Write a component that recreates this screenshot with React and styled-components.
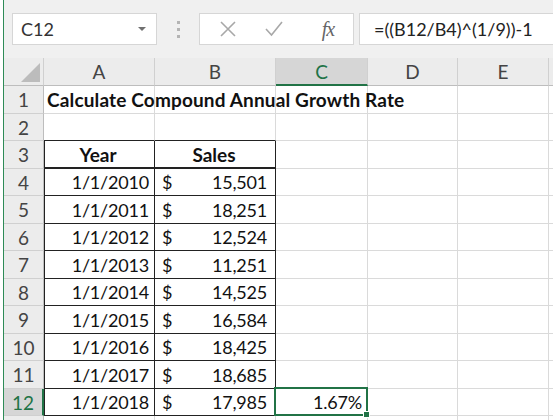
import React from "react";
import styled, { createGlobalStyle, css } from "styled-components";

const Global = createGlobalStyle`
  html, body { margin: 0; padding: 0; background: #fff; }
  body { font-family: Lato, "Liberation Sans", sans-serif; }
`;

const Frame = styled.div`
  width: 553px;
  height: 420px;
  overflow: hidden;
  padding-left: 3px;
  box-sizing: border-box;
  background: #fff;
`;

const Inner = styled.div`
  border-left: 1px solid #2e8b57;
  height: 100%;
  display: flex;
  flex-direction: column;
`;

const Bar = styled.div`
  height: 58px;
  flex: none;
  background: #f0f0f0;
  display: flex;
  align-items: center;
  padding-left: 8px;
`;

const Box = styled.div`
  height: 32px;
  box-sizing: border-box;
  background: #fff;
  border: 1px solid #d6d6d6;
  display: flex;
  align-items: center;
`;

const NameBox = styled(Box)`
  width: 145px;
  padding: 0 8px;
  justify-content: space-between;
  font-size: 18px;
  color: #333;
`;

const Caret = styled.span`
  width: 0;
  height: 0;
  border-left: 4px solid transparent;
  border-right: 4px solid transparent;
  border-top: 4px solid #707070;
  margin-right: 2px;
`;

const Grip = styled.div`
  width: 42px;
  display: flex;
  flex-direction: column;
  align-items: center;
  gap: 4px;
  span { width: 3px; height: 3px; background: #b4b4b4; }
`;

const IconBox = styled(Box)`
  width: 155px;
  padding-left: 17px;
`;

const IconSlot = styled.div`
  width: ${(p) => p.w}px;
  display: flex;
  align-items: center;
  justify-content: center;
`;

const Fx = styled.span`
  font-family: "Liberation Serif", serif;
  font-style: italic;
  font-size: 20px;
  color: #666;
  letter-spacing: -1px;
`;

const FormulaBox = styled(Box)`
  flex: 1;
  margin-left: 5px;
  margin-right: -10px;
  padding-left: 14px;
  font-size: 18px;
  color: #222;
`;

const Sheet = styled.div`
  display: grid;
  grid-template-columns: 40px 111px 121px 92px 90px 91px 40px;
  grid-template-rows: 28px repeat(6, 28px 27px) 28px;
  background: #fff;
`;

const Head = styled.div`
  box-sizing: border-box;
  background: #ececec;
  border-right: 1px solid #d0d0d0;
  border-bottom: 1px solid #bdbdbd;
  display: flex;
  align-items: center;
  justify-content: center;
  font-size: 19px;
  color: #444;
  ${(p) =>
    p.$sel &&
    css`
      background: #d6d6d6;
      color: #217346;
      border-bottom: 2px solid #217346;
    `}
`;

const Corner = styled(Head)`
  justify-content: flex-end;
  align-items: flex-end;
  padding: 0 3px 3px 0;
`;

const Tri = styled.span`
  width: 0;
  height: 0;
  border-left: 19px solid transparent;
  border-bottom: 19px solid #bcbcbc;
`;

const RowHead = styled.div`
  box-sizing: border-box;
  background: #ececec;
  border-right: 1px solid #bdbdbd;
  border-bottom: 1px solid #d0d0d0;
  display: flex;
  align-items: center;
  justify-content: center;
  font-size: 19px;
  color: #444;
  ${(p) =>
    p.$sel &&
    css`
      background: #d6d6d6;
      color: #217346;
      border-right: 2px solid #217346;
    `}
`;

const Cell = styled.div`
  box-sizing: border-box;
  position: relative;
  border-right: 1px solid ${(p) => (p.$tbl ? "#222" : "#dadada")};
  border-bottom: 1px solid ${(p) => (p.$tblTop || p.$tbl ? "#222" : "#dadada")};
  ${(p) => p.$left && css`box-shadow: inset 1px 0 0 #222;`}
  ${(p) => p.$thick && css`box-shadow: inset 0 -1px 0 #222 ${p.$left ? ", inset 1px 0 0 #222" : ""};`}
  display: flex;
  align-items: center;
  justify-content: ${(p) => p.$align || "flex-start"};
  padding: 0 5px 0 3px;
  font-size: ${(p) => (p.$bold ? 19 : 18)}px;
  letter-spacing: ${(p) => (p.$title ? "0.15px" : p.$bold ? "0" : "-0.2px")};
  color: #111;
  font-weight: ${(p) => (p.$bold ? 700 : 400)};
  white-space: nowrap;
  overflow: ${(p) => (p.$over ? "visible" : "hidden")};
  z-index: ${(p) => (p.$over ? 2 : 0)};
`;

const Money = styled.div`
  flex: 1;
  display: flex;
  justify-content: space-between;
  padding-left: 4px;
  padding-right: 3px;
`;

const Selection = styled.div`
  position: absolute;
  left: -2px;
  top: -2px;
  right: -1px;
  bottom: -1px;
  border: 2px solid #217346;
  pointer-events: none;
  &::after {
    content: "";
    position: absolute;
    right: -4px;
    bottom: -4px;
    width: 5px;
    height: 5px;
    background: #217346;
    border: 1px solid #fff;
  }
`;

const cols = ["A", "B", "C", "D", "E", ""];
const data = [
  ["1/1/2010", "15,501"],
  ["1/1/2011", "18,251"],
  ["1/1/2012", "12,524"],
  ["1/1/2013", "11,251"],
  ["1/1/2014", "14,525"],
  ["1/1/2015", "16,584"],
  ["1/1/2016", "18,425"],
  ["1/1/2017", "18,685"],
  ["1/1/2018", "17,985"],
];

function Row({ n, label = n, children }) {
  return (
    <>
      <RowHead $sel={n === 12}>{label}</RowHead>
      {children}
    </>
  );
}

function Blank({ from = 0, top }) {
  const cells = [];
  for (let i = from; i < 6; i++) cells.push(<Cell key={i} $tblTop={top && i < 2} />);
  return cells;
}

export default function App() {
  return (
    <>
      <Global />
      <Frame>
        <Inner>
          <Bar>
            <NameBox>
              <span>C12</span>
              <Caret />
            </NameBox>
            <Grip>
              <span />
              <span />
              <span />
            </Grip>
            <IconBox>
              <IconSlot w={22}>
                <svg width="18" height="18" viewBox="0 0 18 18">
                  <path d="M2 2 L16 16 M16 2 L2 16" stroke="#a8a8a8" strokeWidth="1.6" fill="none" />
                </svg>
              </IconSlot>
              <IconSlot w={70}>
                <svg width="20" height="18" viewBox="0 0 20 18">
                  <path d="M2 9 L7.5 15 L18 2" stroke="#a8a8a8" strokeWidth="1.6" fill="none" />
                </svg>
              </IconSlot>
              <IconSlot w={38}>
                <Fx>fx</Fx>
              </IconSlot>
            </IconBox>
            <FormulaBox>=((B12/B4)^(1/9))-1</FormulaBox>
          </Bar>
          <Sheet>
            <Corner>
              <Tri />
            </Corner>
            {cols.map((c) => (
              <Head key={c || "f"} $sel={c === "C"}>
                {c}
              </Head>
            ))}
            <Row n={1}>
              <Cell $bold $title $over>Calculate Compound Annual Growth Rate</Cell>
              <Blank from={1} />
            </Row>
            <Row n={2}>
              <Blank top />
            </Row>
            <Row n={3}>
              <Cell $tbl $left $thick $bold $align="center">Year</Cell>
              <Cell $tbl $thick $bold $align="center">Sales</Cell>
              <Blank from={2} />
            </Row>
            {data.map(([d, v], i) => {
              const n = i + 4;
              return (
                <Row key={n} n={n}>
                  <Cell $tbl $left $align="flex-end">{d}</Cell>
                  <Cell $tbl>
                    <Money>
                      <span>$</span>
                      <span>{v}</span>
                    </Money>
                  </Cell>
                  {n === 12 ? (
                    <Cell $align="flex-end" $over>
                      1.67%
                      <Selection />
                    </Cell>
                  ) : (
                    <Cell />
                  )}
                  <Blank from={3} />
                </Row>
              );
            })}
            <Row n={13} label="">
              <Blank />
            </Row>
          </Sheet>
        </Inner>
      </Frame>
    </>
  );
}
